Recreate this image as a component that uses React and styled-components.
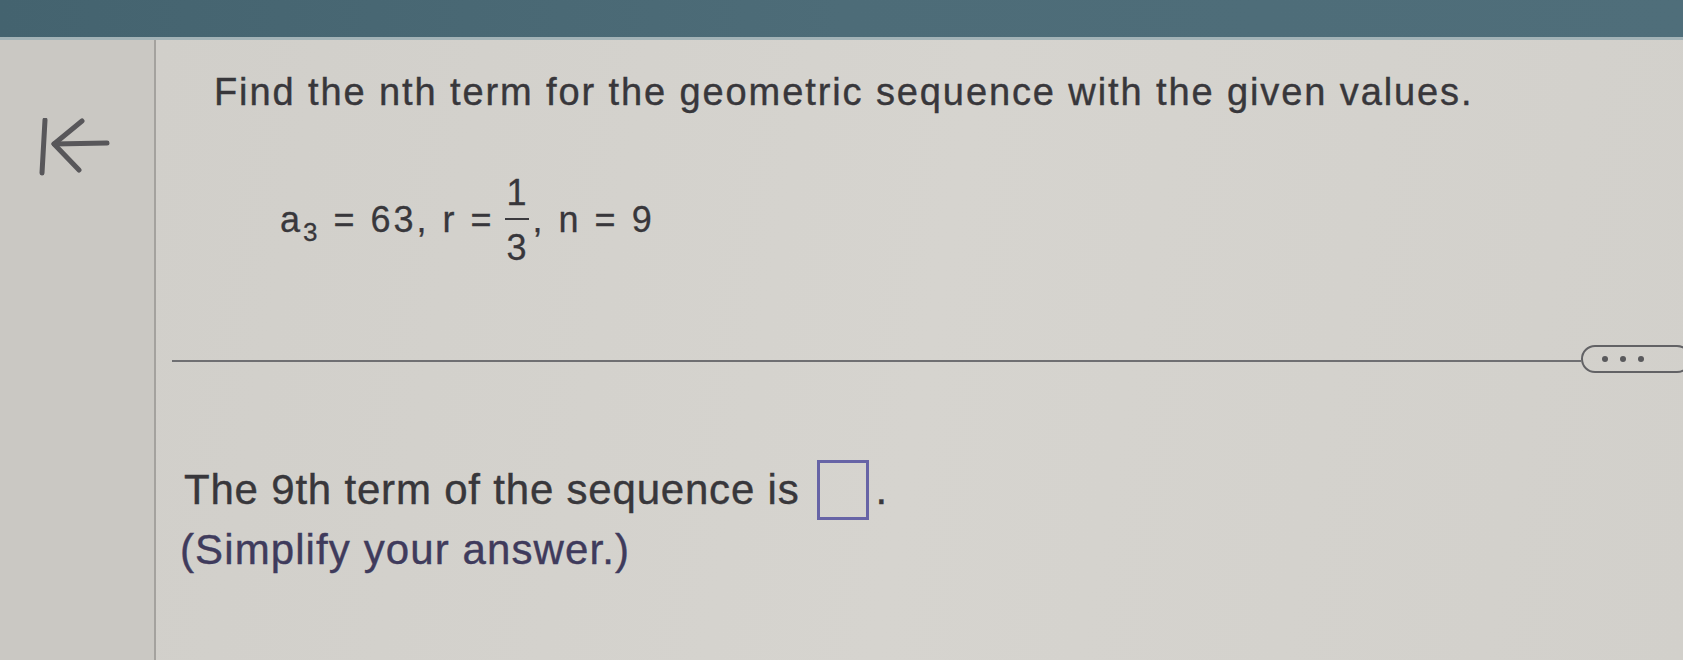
import React from 'react';
import styled, { createGlobalStyle } from 'styled-components';

const GlobalStyle = createGlobalStyle`
  html, body {
    margin: 0;
    padding: 0;
    background: #d3d1cc;
  }
  body {
    font-family: "Liberation Sans", Arial, sans-serif;
    color: #3b3a3d;
  }
`;

const Page = styled.div`
  display: flex;
  flex-direction: column;
  width: 1683px;
  height: 660px;
  overflow: hidden;
  background: linear-gradient(100deg, #d0cec9 0%, #d6d4cf 55%, #d2d0cb 100%);
`;

const TopBar = styled.div`
  height: 37px;
  flex-shrink: 0;
  background: linear-gradient(90deg, #44636f 0%, #4d6c78 50%, #4f6e7a 100%);
  border-bottom: 3px solid #a3b3b7;
`;

const Body = styled.div`
  display: flex;
  flex: 1;
`;

const Sidebar = styled.aside`
  width: 156px;
  flex-shrink: 0;
  background: #cac8c3;
  border-right: 2px solid #a4a29e;
  padding: 78px 0 0 37px;
  box-sizing: border-box;
`;

const Main = styled.main`
  flex: 1;
  display: flex;
  flex-direction: column;
`;

const Title = styled.h1`
  margin: 30px 0 0 58px;
  font-size: 38px;
  font-weight: normal;
  line-height: 1.2;
  letter-spacing: 1.9px;
  color: #38373b;
  -webkit-text-stroke: 0.4px #38373b;
`;

const Equation = styled.div`
  display: flex;
  align-items: center;
  margin: 57px 0 0 124px;
  font-size: 36px;
  letter-spacing: 3px;
  color: #38373b;
  -webkit-text-stroke: 0.3px #38373b;
  white-space: pre;
`;

const Sub = styled.sub`
  font-size: 26px;
  vertical-align: -9px;
  line-height: 0;
`;

const Fraction = styled.span`
  display: inline-flex;
  flex-direction: column;
  align-items: center;
  line-height: 1.1;
  margin: 0 4px 0 10px;
  letter-spacing: 0;
`;

const FracBar = styled.span`
  display: block;
  width: 24px;
  height: 2px;
  background: #3b3a3e;
  margin: 6px 0 8px;
`;

const DividerRow = styled.div`
  display: flex;
  align-items: center;
  margin: 81px 0 0 16px;
`;

const Rule = styled.div`
  flex: 1;
  height: 2px;
  background: #6f6f72;
`;

const MoreButton = styled.div`
  display: flex;
  align-items: center;
  justify-content: center;
  gap: 12px;
  width: 110px;
  height: 28px;
  margin: -4px -8px 0 0;
  border: 2px solid #626265;
  border-radius: 14px;
  box-sizing: border-box;
  padding-right: 26px;
`;

const Dot = styled.span`
  width: 6px;
  height: 6px;
  border-radius: 50%;
  background: #59595c;
`;

const Answer = styled.p`
  display: flex;
  align-items: center;
  margin: 87px 0 0 ${p => p.$indent}px;
  font-size: ${p => p.$size}px;
  letter-spacing: 0.8px;
  line-height: 1.25;
  color: ${p => p.$color};
  -webkit-text-stroke: 0.4px ${p => p.$color};
`;

const AnswerBox = styled.span`
  display: inline-block;
  width: 52px;
  height: 60px;
  margin: 0 6px 0 18px;
  border: 3px solid #6764a6;
  box-sizing: border-box;
`;

const Note = styled.p`
  margin: 4px 0 0 24px;
  font-size: 42px;
  letter-spacing: 1.1px;
  line-height: 1.25;
  color: #3f3b5c;
  -webkit-text-stroke: 0.4px #3f3b5c;
`;

function BackIcon() {
  return (
    <svg width="80" height="60" viewBox="0 0 80 60" fill="none">
      <path d="M8 2 L5 55" stroke="#58575a" strokeWidth="5" strokeLinecap="round" />
      <path d="M45 3 L17 26 L42 52" stroke="#58575a" strokeWidth="5" strokeLinecap="round" strokeLinejoin="round" />
      <path d="M17 26 L70 25" stroke="#58575a" strokeWidth="5" strokeLinecap="round" />
    </svg>
  );
}

export default function App() {
  return (
    <>
      <GlobalStyle />
      <Page>
        <TopBar />
        <Body>
          <Sidebar>
            <BackIcon />
          </Sidebar>
          <Main>
            <Title>Find the nth term for the geometric sequence with the given values.</Title>
            <Equation>
              <span>a<Sub>3</Sub> = 63, r =</span>
              <Fraction>
                <span>1</span>
                <FracBar />
                <span>3</span>
              </Fraction>
              <span>, n = 9</span>
            </Equation>
            <DividerRow>
              <Rule />
              <MoreButton>
                <Dot />
                <Dot />
                <Dot />
              </MoreButton>
            </DividerRow>
            <Answer $indent={28} $size={42} $color="#38373b">
              The 9th term of the sequence is
              <AnswerBox />
              .
            </Answer>
            <Note>(Simplify your answer.)</Note>
          </Main>
        </Body>
      </Page>
    </>
  );
}
